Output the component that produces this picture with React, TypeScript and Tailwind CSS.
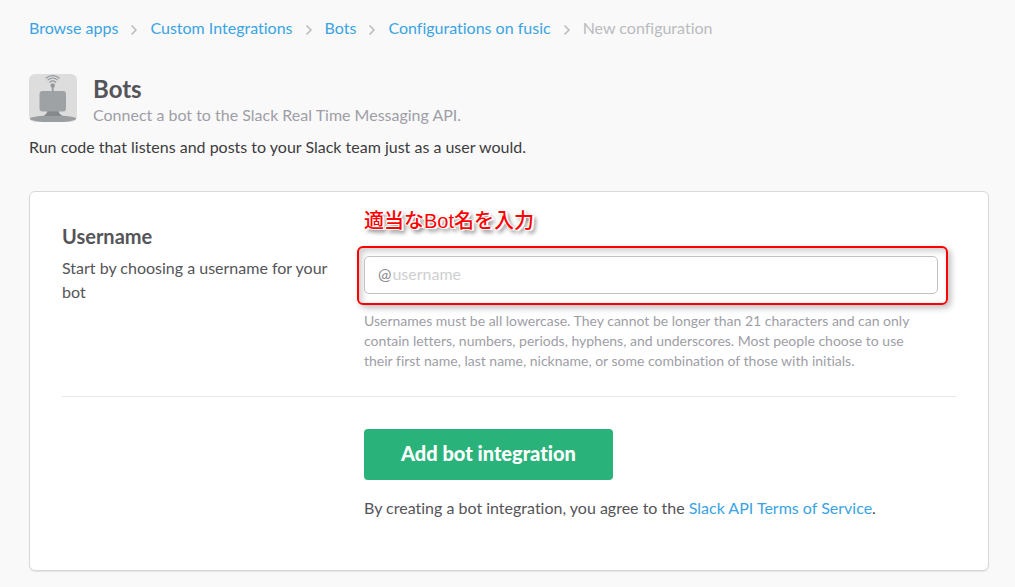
import { ChevronRight } from "lucide-react";

const CRUMBS = ["Browse apps", "Custom Integrations", "Bots", "Configurations on fusic"];

function Breadcrumbs() {
  return (
    <nav aria-label="Breadcrumb">
      <ol className="flex flex-wrap items-center">
        {CRUMBS.map((label) => (
          <li key={label} className="flex items-center">
            <a href="#" className="text-[#3aa3e3] hover:underline">
              {label}
            </a>
            <ChevronRight className="mx-2 mt-1 h-4 w-4 text-[#babbbf]" strokeWidth={2.5} aria-hidden />
          </li>
        ))}
        <li aria-current="page" className="text-[#babbbf]">
          New configuration
        </li>
      </ol>
    </nav>
  );
}

function BotIcon() {
  return (
    <svg viewBox="0 0 48 48" className="h-12 w-12 shrink-0" aria-hidden>
      <defs>
        <clipPath id="bot-tile">
          <rect width="48" height="48" rx="6" />
        </clipPath>
      </defs>
      <g clipPath="url(#bot-tile)">
        <rect width="48" height="48" fill="#dddddd" />
        <ellipse cx="24" cy="44.8" rx="23.5" ry="3.4" fill="#9b9ea0" />
        <path d="M18.5 36h11c0 3 1.5 4.5 4 6h-19c2.5-1.5 4-3 4-6z" fill="#85898b" />
        <rect x="10.5" y="17" width="26.5" height="20.5" rx="3" fill="#9ea2a5" />
        <path d="M22.8 12h1.8v5.5h-1.8z" fill="#94989a" />
        <circle cx="23.7" cy="11.5" r="2.2" fill="#94989a" />
        <g fill="none" stroke="#94989a" strokeWidth="1.2" strokeLinecap="round">
          <path d="M20.7 8.2a4.6 4.6 0 0 1 6 0" />
          <path d="M19 5.9a7.3 7.3 0 0 1 9.4 0" />
          <path d="M17.2 4a9.8 9.8 0 0 1 13 0" />
        </g>
      </g>
    </svg>
  );
}

function UsernameField() {
  return (
    <div className="relative">
      <p className="absolute bottom-full left-0 mb-5 text-[20px] leading-[30px] font-medium whitespace-nowrap text-[#ff0000] [font-family:'Liberation_Sans','Noto_Sans_CJK_JP',sans-serif] [text-shadow:1px_0_#fff,-1px_0_#fff,0_1px_#fff,0_-1px_#fff,2px_1px_#fff,-1px_-1px_#fff,3px_3px_4px_rgba(0,0,0,0.7)]">
        適当なBot名を入力
      </p>
      {/* highlight around the field */}
      <div
        aria-hidden
        className="absolute -top-[10px] -right-[10px] -bottom-[11px] -left-[7px] rounded-md border-2 border-[#ff0000] shadow-[3px_3px_6px_rgba(0,0,0,0.25),inset_3px_3px_6px_rgba(0,0,0,0.2)]"
      />
      <div className="relative flex h-[38px] items-stretch rounded-[5px] border border-[#c1c2c5] bg-white px-[13px]">
        <span aria-hidden className="pt-[5px] text-[#88888d]">
          @
        </span>
        <input
          id="username"
          type="text"
          placeholder="username"
          className="min-w-0 flex-1 bg-transparent pb-[2px] pl-px outline-none placeholder:text-[#cfcfd2]"
        />
      </div>
    </div>
  );
}

export default function App() {
  return (
    <main className="min-h-screen bg-[#f9f9f9] pt-4 pr-[26px] pb-4 pl-[29px] text-[16px] leading-6 text-[#555459] [font-family:Lato,sans-serif] [font-variant-ligatures:no-common-ligatures]">
      <Breadcrumbs />

      <header className="mt-[34px] flex gap-4">
        <BotIcon />
        <div>
          <h1 className="text-[24px] leading-[30px] font-bold">Bots</h1>
          <p className="leading-[22px] text-[#9e9ea6]">
            Connect a bot to the Slack Real Time Messaging API.
          </p>
        </div>
      </header>
      <p className="mt-[9px] text-[#3d3c40]">
        Run code that listens and posts to your Slack team just as a user would.
      </p>

      <form
        onSubmit={(e) => e.preventDefault()}
        className="mt-8 rounded-md border border-[#d8d8d8] bg-white px-8 pt-8 pb-[50px] shadow-[0_1px_1px_rgba(0,0,0,0.08)]"
      >
        <section className="flex border-b border-[#e8e8e8] pb-[25px]">
          <div className="w-[302px] shrink-0 pr-8">
            <h2 className="mb-2 text-[20px] leading-6 font-bold">
              <label htmlFor="username">Username</label>
            </h2>
            <p>Start by choosing a username for your bot</p>
          </div>
          <div className="flex-1 pt-8 pr-[18px]">
            <UsernameField />
            <p className="mt-[17px] max-w-[560px] text-[14px] leading-5 text-[#9e9ea6]">
              Usernames must be all lowercase. They cannot be longer than 21 characters and can only
              contain letters, numbers, periods, hyphens, and underscores. Most people choose to use
              their first name, last name, nickname, or some combination of those with initials.
            </p>
          </div>
        </section>

        <div className="pt-8 pl-[302px]">
          <button
            type="submit"
            className="h-[51px] rounded bg-[#2ab27b] px-[37px] pb-[3px] text-[20px] leading-6 font-black text-white"
          >
            Add bot integration
          </button>
          <p className="mt-4">
            By creating a bot integration, you agree to the{" "}
            <a href="#" className="text-[#3aa3e3] hover:underline">
              Slack API Terms of Service
            </a>
            .
          </p>
        </div>
      </form>
    </main>
  );
}
